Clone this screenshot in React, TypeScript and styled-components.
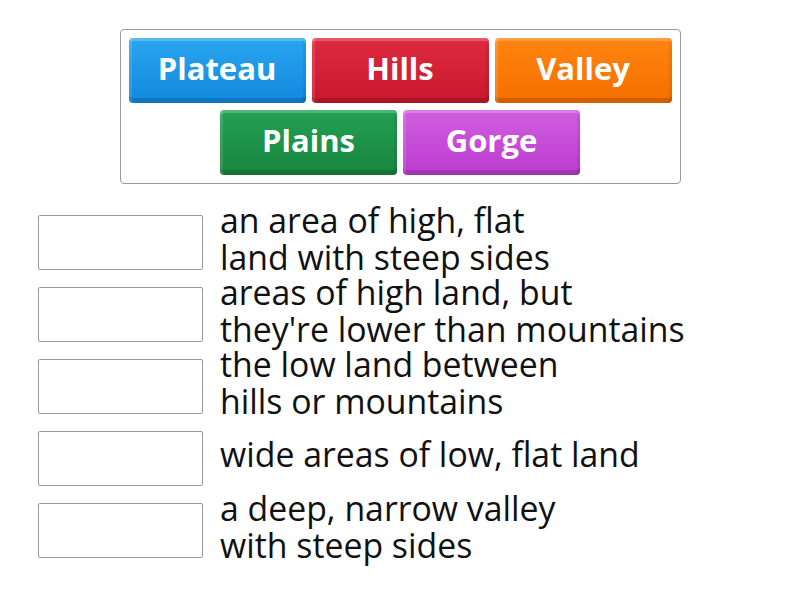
import React from 'react';
import styled, { createGlobalStyle } from 'styled-components';

const GlobalStyle = createGlobalStyle`
  body {
    margin: 0;
    background: #ffffff;
    font-family: "Open Sans", "Liberation Sans", sans-serif;
  }
`;

const Page = styled.div`
  width: 800px;
  padding: 29px 0 40px;
`;

const Bank = styled.div`
  width: 561px;
  box-sizing: border-box;
  margin: 0 auto;
  padding: 8px 0;
  border: 1px solid #9a9a9a;
  border-radius: 4px;
  display: flex;
  flex-wrap: wrap;
  justify-content: center;
  gap: 7px 6px;
`;

const Tile = styled.div<{ $top: string; $bottom: string }>`
  width: 177px;
  height: 65px;
  box-sizing: border-box;
  border-radius: 4px;
  display: flex;
  align-items: center;
  justify-content: center;
  padding-bottom: 5px;
  color: #ffffff;
  font-size: 31px;
  font-weight: 700;
  background: linear-gradient(${(p) => p.$top}, ${(p) => p.$bottom});
  box-shadow:
    inset 0 3px 0 rgba(255, 255, 255, 0.22),
    inset 3px 0 0 rgba(255, 255, 255, 0.12),
    inset -3px 0 0 rgba(0, 0, 0, 0.06),
    inset 0 -5px 0 rgba(0, 0, 0, 0.14);
`;

const List = styled.div`
  display: flex;
  flex-direction: column;
  gap: 17px;
  margin-top: 31px;
  padding-left: 38px;
`;

const Row = styled.div`
  display: flex;
  align-items: center;
  height: 55px;
  gap: 17px;
`;

const Slot = styled.div`
  width: 165px;
  height: 55px;
  flex: none;
  box-sizing: border-box;
  border: 1px solid #9a9a9a;
  border-radius: 2px;
`;

const Clue = styled.div`
  font-size: 33.8px;
  line-height: 37px;
  color: #111111;
  white-space: nowrap;
  padding-bottom: 8px;
`;

const tiles = [
  { label: 'Plateau', top: '#2aa6ee', bottom: '#1188df' },
  { label: 'Hills', top: '#df2a40', bottom: '#c8182c' },
  { label: 'Valley', top: '#ff8410', bottom: '#f56f00' },
  { label: 'Plains', top: '#22a152', bottom: '#19853e' },
  { label: 'Gorge', top: '#d05ee0', bottom: '#bc3ccf' },
];

const clues = [
  ['an area of high, flat', 'land with steep sides'],
  ['areas of high land, but', "they're lower than mountains"],
  ['the low land between', 'hills or mountains'],
  ['wide areas of low, flat land'],
  ['a deep, narrow valley', 'with steep sides'],
];

export default function App() {
  return (
    <Page>
      <GlobalStyle />
      <Bank>
        {tiles.map((t) => (
          <Tile key={t.label} $top={t.top} $bottom={t.bottom}>
            {t.label}
          </Tile>
        ))}
      </Bank>
      <List>
        {clues.map((lines, i) => (
          <Row key={i}>
            <Slot />
            <Clue>
              {lines.map((l, j) => (
                <React.Fragment key={j}>
                  {j > 0 && <br />}
                  {l}
                </React.Fragment>
              ))}
            </Clue>
          </Row>
        ))}
      </List>
    </Page>
  );
}
